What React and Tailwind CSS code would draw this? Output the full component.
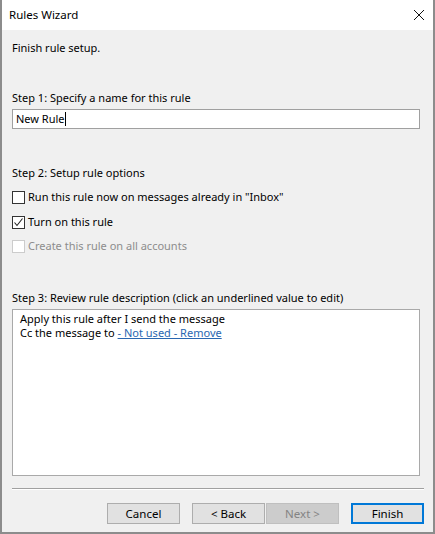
import React from "react";

function CheckRow({ checked, disabled, label, className }) {
  return (
    <div className={`flex items-center h-[16px] ${className}`}>
      <span
        className={`w-[13px] h-[13px] border flex items-center justify-center bg-white ${
          disabled ? "border-[#cccccc]" : "border-[#333333]"
        }`}
      >
        {checked && (
          <svg width="11" height="11" viewBox="0 0 11 11">
            <path d="M1.5 5.5 L4 8.5 L9.5 1.5" fill="none" stroke="#222" strokeWidth="1.1" />
          </svg>
        )}
      </span>
      <span className={`ml-[3px] ${disabled ? "text-[#8d8d8d]" : "text-black"}`}>{label}</span>
    </div>
  );
}

function Btn({ children, primary, disabled }) {
  const base = "h-[21px] w-[73px] text-[11.5px] leading-none flex items-center justify-center";
  let look = "bg-[#e1e1e1] border border-[#adadad] text-black";
  if (primary) look = "bg-[#e1e1e1] border-2 border-[#0078d7] text-black";
  if (disabled) look = "bg-[#cccccc] border border-[#bfbfbf] text-[#838383]";
  return <div className={`${base} ${look}`}>{children}</div>;
}

export default function App() {
  return (
    <div
      className="w-[435px] h-[534px] flex flex-col bg-[#f0f0f0] border-x-2 border-b-2 border-[#8c8c8c] text-[11px] leading-[16px] text-black"
      style={{ fontFamily: '"Noto Sans", "Open Sans", sans-serif' }}
    >
      {/* title bar */}
      <div className="h-[30px] bg-white flex items-center justify-between pl-[7px] pr-[8px] shrink-0">
        <span className="text-[11.5px]">Rules Wizard</span>
        <svg width="12" height="12" viewBox="0 0 12 12">
          <path d="M1 1 L11 11 M11 1 L1 11" stroke="#111" strokeWidth="1" />
        </svg>
      </div>

      <div className="flex flex-col pl-[10px] pr-[9px]">
        <div className="mt-[10px]">Finish rule setup.</div>

        <div className="mt-[34px]">Step 1: Specify a name for this rule</div>
        <div className="mt-[3px] mr-[4px] h-[20px] bg-white border border-[#a0a0a0] flex items-center px-[3px]">
          <span>New Rule</span>
          <span className="w-px h-[14px] bg-black" />
        </div>

        <div className="mt-[36px]">Step 2: Setup rule options</div>
        <CheckRow className="mt-[8px]" label={'Run this rule now on messages already in "Inbox"'} />
        <CheckRow className="mt-[9px]" checked label="Turn on this rule" />
        <CheckRow className="mt-[8px]" disabled label="Create this rule on all accounts" />

        <div className="mt-[36px]">Step 3: Review rule description (click an underlined value to edit)</div>
        <div className="mt-[3px] mr-[4px] h-[167px] bg-white border border-[#a9a9a9] px-[7px] pt-[2px] leading-[14px]">
          <div>Apply this rule after I send the message</div>
          <div className="flex gap-[3px]">
            <span>Cc the message to</span>
            <span className="text-[#2a67b1] underline">- Not used - Remove</span>
          </div>
        </div>

        <div className="mt-[12px] h-[2px] border-t border-[#a0a0a0] border-b border-b-white" />

        <div className="mt-[13px] flex justify-end">
          <Btn>Cancel</Btn>
          <div className="ml-[12px] flex gap-[1px]">
            <Btn>&lt; Back</Btn>
            <Btn disabled>Next &gt;</Btn>
          </div>
          <div className="ml-[12px]">
            <Btn primary>Finish</Btn>
          </div>
        </div>
      </div>
    </div>
  );
}
